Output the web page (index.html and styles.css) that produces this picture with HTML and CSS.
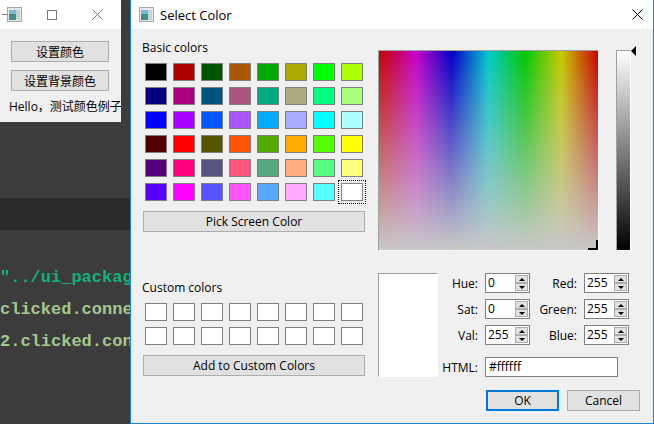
FILE: index.html

```html
<!DOCTYPE html>
<html lang="zh-CN">
<head>
  <meta charset="UTF-8">
  <meta name="viewport" content="width=device-width, initial-scale=1.0">
  <title>Select Color</title>
  <link rel="stylesheet" href="styles.css">
</head>
<body>
  <!-- editor behind the windows -->
  <div class="editor">
    <div class="editor-band"></div>
    <div class="code code-green">"../ui_package</div>
    <div class="code code-olive">clicked.connect</div>
    <div class="code code-olive">2.clicked.connect</div>
  </div>

  <!-- small demo window -->
  <div class="demo-window">
    <div class="titlebar demo-titlebar">
      <span class="min-tail"></span>
      <svg class="app-icon" viewBox="0 0 15 15"><rect x="0.5" y="0.5" width="14" height="14" fill="#e8e8e8" stroke="#a8a8a8"/><rect x="2" y="3" width="7" height="10" fill="#3f8f86"/><rect x="2" y="3" width="7" height="4" fill="#7fb8c8"/><rect x="9" y="3" width="4" height="10" fill="#c9d3d6"/></svg>
      <span class="max-icon"></span>
      <svg class="close-icon grey" viewBox="0 0 11 11"><path d="M0.5 0.5L10.5 10.5M10.5 0.5L0.5 10.5"/></svg>
    </div>
    <div class="demo-body">
      <button class="btn">设置颜色</button>
      <button class="btn">设置背景颜色</button>
      <div class="demo-label">Hello，测试颜色例子</div>
    </div>
  </div>

  <!-- color dialog -->
  <div class="dialog">
    <div class="titlebar">
      <svg class="app-icon" viewBox="0 0 15 15"><rect x="0.5" y="0.5" width="14" height="14" fill="#e8e8e8" stroke="#a8a8a8"/><rect x="2" y="3" width="7" height="10" fill="#3f8f86"/><rect x="2" y="3" width="7" height="4" fill="#7fb8c8"/><rect x="9" y="3" width="4" height="10" fill="#c9d3d6"/></svg>
      <span class="dialog-title">Select Color</span>
      <svg class="close-icon" viewBox="0 0 11 11"><path d="M0.5 0.5L10.5 10.5M10.5 0.5L0.5 10.5"/></svg>
    </div>

    <div class="dialog-body">
      <div class="left-col">
        <div class="group-label">Basic colors</div>
        <div class="swatches">
          <span class="c-000000"></span><span class="c-aa0000"></span><span class="c-005500"></span><span class="c-aa5500"></span><span class="c-00aa00"></span><span class="c-aaaa00"></span><span class="c-00ff00"></span><span class="c-aaff00"></span>
          <span class="c-00007f"></span><span class="c-aa007f"></span><span class="c-00557f"></span><span class="c-aa557f"></span><span class="c-00aa7f"></span><span class="c-aaaa7f"></span><span class="c-00ff7f"></span><span class="c-aaff7f"></span>
          <span class="c-0000ff"></span><span class="c-aa00ff"></span><span class="c-0055ff"></span><span class="c-aa55ff"></span><span class="c-00aaff"></span><span class="c-aaaaff"></span><span class="c-00ffff"></span><span class="c-aaffff"></span>
          <span class="c-550000"></span><span class="c-ff0000"></span><span class="c-555500"></span><span class="c-ff5500"></span><span class="c-55aa00"></span><span class="c-ffaa00"></span><span class="c-55ff00"></span><span class="c-ffff00"></span>
          <span class="c-55007f"></span><span class="c-ff007f"></span><span class="c-55557f"></span><span class="c-ff557f"></span><span class="c-55aa7f"></span><span class="c-ffaa7f"></span><span class="c-55ff7f"></span><span class="c-ffff7f"></span>
          <span class="c-5500ff"></span><span class="c-ff00ff"></span><span class="c-5555ff"></span><span class="c-ff55ff"></span><span class="c-55aaff"></span><span class="c-ffaaff"></span><span class="c-55ffff"></span><span class="c-ffffff selected"></span>
        </div>
        <button class="btn wide pick-btn">Pick Screen Color</button>

        <div class="group-label custom-label">Custom colors</div>
        <div class="swatches">
          <span></span><span></span><span></span><span></span><span></span><span></span><span></span><span></span>
          <span></span><span></span><span></span><span></span><span></span><span></span><span></span><span></span>
        </div>
        <button class="btn wide add-btn">Add to Custom Colors</button>
      </div>

      <div class="right-col">
        <div class="picker-row">
          <div class="hue-field sunken"><span class="cross-v"></span><span class="cross-h"></span></div>
          <div class="lum-wrap">
            <div class="lum-bar sunken"></div>
            <span class="lum-arrow"></span>
          </div>
        </div>

        <div class="values-row">
          <div class="preview sunken"></div>
          <div class="values">
            <div class="spin-grid">
              <label>Hue:</label><div class="spin"><span class="val">0</span><span class="arrows"><i class="up"></i><i class="down"></i></span></div>
              <label>Red:</label><div class="spin"><span class="val">255</span><span class="arrows"><i class="up"></i><i class="down"></i></span></div>
              <label>Sat:</label><div class="spin"><span class="val">0</span><span class="arrows"><i class="up"></i><i class="down"></i></span></div>
              <label>Green:</label><div class="spin"><span class="val">255</span><span class="arrows"><i class="up"></i><i class="down"></i></span></div>
              <label>Val:</label><div class="spin"><span class="val">255</span><span class="arrows"><i class="up"></i><i class="down"></i></span></div>
              <label>Blue:</label><div class="spin"><span class="val">255</span><span class="arrows"><i class="up"></i><i class="down"></i></span></div>
            </div>
            <div class="html-row">
              <label>HTML:</label>
              <div class="html-input">#ffffff</div>
            </div>
          </div>
        </div>

        <div class="dialog-buttons">
          <button class="btn ok-btn">OK</button>
          <button class="btn">Cancel</button>
        </div>
      </div>
    </div>
  </div>
</body>
</html>
```

FILE: styles.css

```css
* {
  box-sizing: border-box;
}
body {
  margin: 0;
  width: 654px;
  height: 424px;
  overflow: hidden;
  position: relative;
  background-color: #3c3c3c;
  font-family: 'Open Sans', 'Noto Sans CJK SC', sans-serif;
  font-size: 12px;
  color: #000;
}

/* editor behind */
.editor {
  width: 130px;
  height: 424px;
  overflow: hidden;
  padding-top: 198px;
}
.editor-band {
  height: 32px;
  background-color: #2a2a2a;
  margin-bottom: 32px;
}
.code {
  font-family: 'Liberation Mono', monospace;
  font-weight: bold;
  font-size: 17px;
  line-height: 32px;
  white-space: nowrap;
}
.code-green {
  color: #10b27a;
}
.code-olive {
  color: #a5c78d;
}

/* windows */
.demo-window {
  position: absolute;
  left: 0;
  top: 0;
  width: 121px;
  height: 122px;
  background-color: #f0f0f0;
}
.dialog {
  position: absolute;
  left: 130px;
  top: 0;
  width: 524px;
  height: 424px;
  background-color: #f0f0f0;
  border: 1px solid #1883d7;
  border-top: none;
}
.titlebar {
  height: 29px;
  background-color: #fff;
  display: flex;
  align-items: center;
  padding-left: 8px;
}
.demo-titlebar {
  padding-left: 2px;
}
.min-tail {
  width: 5px;
  height: 1px;
  background-color: #777;
}
.app-icon {
  width: 15px;
  height: 15px;
  flex: none;
}
.max-icon {
  width: 10px;
  height: 10px;
  border: 1px solid #777;
  margin-left: 25px;
}
.close-icon {
  width: 11px;
  height: 11px;
  margin-left: auto;
  margin-right: 10px;
  fill: none;
  stroke: #000;
}
.close-icon.grey {
  stroke: #777;
  margin-right: 18px;
}
.dialog-title {
  margin-left: 6px;
  font-size: 13px;
}

.btn {
  display: block;
  padding: 0;
  height: 21px;
  width: 73px;
  background-color: #e1e1e1;
  border: 1px solid #adadad;
  font-family: inherit;
  font-size: 12px;
  color: #000;
}
.demo-body {
  padding: 12px 0 0 11px;
}
.demo-body .btn {
  width: 98px;
  margin-bottom: 8px;
}
.demo-label {
  margin-left: -2px;
  line-height: 16px;
  white-space: nowrap;
}

/* dialog content */
.dialog-body {
  display: flex;
  padding-left: 12px;
}
.left-col {
  width: 222px;
}
.group-label {
  line-height: 16px;
  margin-top: 11px;
  margin-left: -1px;
}
.swatches {
  display: grid;
  grid-template-columns: repeat(8, 22px);
  grid-auto-rows: 18px;
  gap: 6px;
  margin: 7px 0 0 2px;
}
.swatches span {
  border: 1px solid #808080;
  background-color: #fff;
}
.selected {
  outline: 1px dotted #000;
  outline-offset: 2px;
}
.wide {
  width: 222px;
}
.pick-btn {
  margin-top: 10px;
}
.custom-label {
  margin-top: 48px;
}
.add-btn {
  margin-top: 10px;
}

.right-col {
  width: 263px;
  margin-left: 13px;
  padding-top: 21px;
}
.picker-row {
  display: flex;
  height: 201px;
}
.sunken {
  border-style: solid;
  border-width: 1px;
  border-color: #a0a0a0 #fff #fff #a0a0a0;
}
.hue-field {
  width: 221px;
  position: relative;
  overflow: hidden;
  background-image: linear-gradient(to bottom, rgba(200, 200, 200, 0), #c8c8c8),
    linear-gradient(to right, #c80000, #c800c8, #0000c8, #00c8c8, #00c800, #c8c800, #c80000);
}
.cross-v {
  position: absolute;
  right: 0;
  bottom: 0;
  width: 2px;
  height: 10px;
  background-color: #000;
}
.cross-h {
  position: absolute;
  right: 0;
  bottom: 0;
  width: 10px;
  height: 2px;
  background-color: #000;
}
.lum-wrap {
  margin-left: 17px;
  position: relative;
}
.lum-bar {
  width: 15px;
  height: 201px;
  background-image: linear-gradient(to bottom, #fff, #000);
}
.lum-arrow {
  position: absolute;
  left: 15px;
  top: -4px;
  width: 0;
  height: 0;
  border-style: solid;
  border-width: 5px 5px 5px 0;
  border-color: transparent #000 transparent transparent;
}

.values-row {
  display: flex;
  margin-top: 22px;
}
.preview {
  width: 60px;
  height: 104px;
  background-color: #fff;
}
.values {
  margin-left: 0;
}
.spin-grid {
  display: grid;
  grid-template-columns: 47px 45px 54px 45px;
  grid-auto-rows: 20px;
  row-gap: 6px;
  column-gap: 0;
  align-items: center;
}
label {
  text-align: right;
  padding-right: 7px;
  white-space: nowrap;
}
.spin {
  height: 20px;
  display: flex;
  justify-content: space-between;
  background-color: #fff;
  border: 1px solid #808080;
  padding-left: 2px;
  line-height: 18px;
}
.arrows {
  width: 15px;
  display: flex;
  flex-direction: column;
  padding: 1px;
  gap: 0;
}
.arrows i {
  flex: 1;
  display: flex;
  align-items: center;
  justify-content: center;
  background-color: #e1e1e1;
  border: 1px solid #adadad;
}
.up::before {
  content: "";
  border-style: solid;
  border-width: 0 3px 3px 3px;
  border-color: transparent transparent #000 transparent;
}
.down::before {
  content: "";
  border-style: solid;
  border-width: 3px 3px 0 3px;
  border-color: #000 transparent transparent transparent;
}
.html-row {
  display: flex;
  align-items: center;
  margin-top: 12px;
}
.html-row label {
  width: 47px;
}
.html-input {
  width: 133px;
  height: 20px;
  background-color: #fff;
  border: 1px solid #808080;
  padding-left: 3px;
  line-height: 18px;
}
.dialog-buttons {
  display: flex;
  gap: 8px;
  margin: 13px 0 0 108px;
}
.ok-btn {
  border: 2px solid #0078d7;
}

.c-000000 { background-color: #000000 !important; }
.c-aa0000 { background-color: #aa0000 !important; }
.c-005500 { background-color: #005500 !important; }
.c-aa5500 { background-color: #aa5500 !important; }
.c-00aa00 { background-color: #00aa00 !important; }
.c-aaaa00 { background-color: #aaaa00 !important; }
.c-00ff00 { background-color: #00ff00 !important; }
.c-aaff00 { background-color: #aaff00 !important; }
.c-00007f { background-color: #00007f !important; }
.c-aa007f { background-color: #aa007f !important; }
.c-00557f { background-color: #00557f !important; }
.c-aa557f { background-color: #aa557f !important; }
.c-00aa7f { background-color: #00aa7f !important; }
.c-aaaa7f { background-color: #aaaa7f !important; }
.c-00ff7f { background-color: #00ff7f !important; }
.c-aaff7f { background-color: #aaff7f !important; }
.c-0000ff { background-color: #0000ff !important; }
.c-aa00ff { background-color: #aa00ff !important; }
.c-0055ff { background-color: #0055ff !important; }
.c-aa55ff { background-color: #aa55ff !important; }
.c-00aaff { background-color: #00aaff !important; }
.c-aaaaff { background-color: #aaaaff !important; }
.c-00ffff { background-color: #00ffff !important; }
.c-aaffff { background-color: #aaffff !important; }
.c-550000 { background-color: #550000 !important; }
.c-ff0000 { background-color: #ff0000 !important; }
.c-555500 { background-color: #555500 !important; }
.c-ff5500 { background-color: #ff5500 !important; }
.c-55aa00 { background-color: #55aa00 !important; }
.c-ffaa00 { background-color: #ffaa00 !important; }
.c-55ff00 { background-color: #55ff00 !important; }
.c-ffff00 { background-color: #ffff00 !important; }
.c-55007f { background-color: #55007f !important; }
.c-ff007f { background-color: #ff007f !important; }
.c-55557f { background-color: #55557f !important; }
.c-ff557f { background-color: #ff557f !important; }
.c-55aa7f { background-color: #55aa7f !important; }
.c-ffaa7f { background-color: #ffaa7f !important; }
.c-55ff7f { background-color: #55ff7f !important; }
.c-ffff7f { background-color: #ffff7f !important; }
.c-5500ff { background-color: #5500ff !important; }
.c-ff00ff { background-color: #ff00ff !important; }
.c-5555ff { background-color: #5555ff !important; }
.c-ff55ff { background-color: #ff55ff !important; }
.c-55aaff { background-color: #55aaff !important; }
.c-ffaaff { background-color: #ffaaff !important; }
.c-55ffff { background-color: #55ffff !important; }
.c-ffffff { background-color: #ffffff !important; }
```
